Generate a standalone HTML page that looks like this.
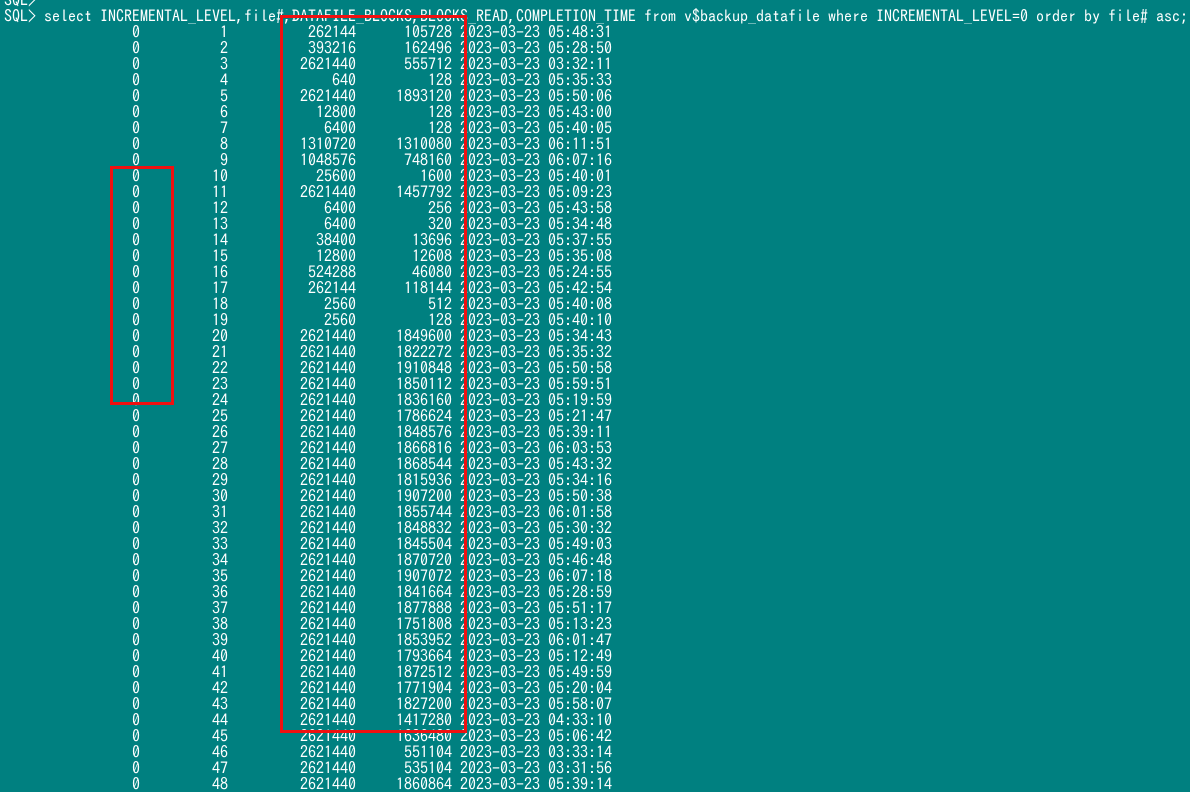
<!DOCTYPE html>
<html><head><meta charset="utf-8"><style>
html,body{margin:0;padding:0;width:1190px;height:790px;overflow:hidden;background:#008080;}
pre{position:absolute;left:4px;top:-8px;margin:0;color:#fff;font-family:"IPAGothic","Liberation Mono",monospace;font-size:16px;line-height:16px;white-space:pre;}
.b{position:absolute;border:3px solid #f01010;box-sizing:border-box;}
</style></head><body>
<pre>SQL>
SQL> select INCREMENTAL_LEVEL,file#,DATAFILE_BLOCKS,BLOCKS_READ,COMPLETION_TIME from v$backup_datafile where INCREMENTAL_LEVEL=0 order by file# asc;
                0          1          262144      105728 2023-03-23 05:48:31
                0          2          393216      162496 2023-03-23 05:28:50
                0          3         2621440      555712 2023-03-23 03:32:11
                0          4             640         128 2023-03-23 05:35:33
                0          5         2621440     1893120 2023-03-23 05:50:06
                0          6           12800         128 2023-03-23 05:43:00
                0          7            6400         128 2023-03-23 05:40:05
                0          8         1310720     1310080 2023-03-23 06:11:51
                0          9         1048576      748160 2023-03-23 06:07:16
                0         10           25600        1600 2023-03-23 05:40:01
                0         11         2621440     1457792 2023-03-23 05:09:23
                0         12            6400         256 2023-03-23 05:43:58
                0         13            6400         320 2023-03-23 05:34:48
                0         14           38400       13696 2023-03-23 05:37:55
                0         15           12800       12608 2023-03-23 05:35:08
                0         16          524288       46080 2023-03-23 05:24:55
                0         17          262144      118144 2023-03-23 05:42:54
                0         18            2560         512 2023-03-23 05:40:08
                0         19            2560         128 2023-03-23 05:40:10
                0         20         2621440     1849600 2023-03-23 05:34:43
                0         21         2621440     1822272 2023-03-23 05:35:32
                0         22         2621440     1910848 2023-03-23 05:50:58
                0         23         2621440     1850112 2023-03-23 05:59:51
                0         24         2621440     1836160 2023-03-23 05:19:59
                0         25         2621440     1786624 2023-03-23 05:21:47
                0         26         2621440     1848576 2023-03-23 05:39:11
                0         27         2621440     1866816 2023-03-23 06:03:53
                0         28         2621440     1868544 2023-03-23 05:43:32
                0         29         2621440     1815936 2023-03-23 05:34:16
                0         30         2621440     1907200 2023-03-23 05:50:38
                0         31         2621440     1855744 2023-03-23 06:01:58
                0         32         2621440     1848832 2023-03-23 05:30:32
                0         33         2621440     1845504 2023-03-23 05:49:03
                0         34         2621440     1870720 2023-03-23 05:46:48
                0         35         2621440     1907072 2023-03-23 06:07:18
                0         36         2621440     1841664 2023-03-23 05:28:59
                0         37         2621440     1877888 2023-03-23 05:51:17
                0         38         2621440     1751808 2023-03-23 05:13:23
                0         39         2621440     1853952 2023-03-23 06:01:47
                0         40         2621440     1793664 2023-03-23 05:12:49
                0         41         2621440     1872512 2023-03-23 05:49:59
                0         42         2621440     1771904 2023-03-23 05:20:04
                0         43         2621440     1827200 2023-03-23 05:58:07
                0         44         2621440     1417280 2023-03-23 04:33:10
                0         45         2621440     1636480 2023-03-23 05:06:42
                0         46         2621440      551104 2023-03-23 03:33:14
                0         47         2621440      535104 2023-03-23 03:31:56
                0         48         2621440     1860864 2023-03-23 05:39:14</pre>
<div class="b" style="left:280px;top:15px;width:187px;height:718px"></div>
<div class="b" style="left:110px;top:166px;width:64px;height:239px"></div>
</body></html>
